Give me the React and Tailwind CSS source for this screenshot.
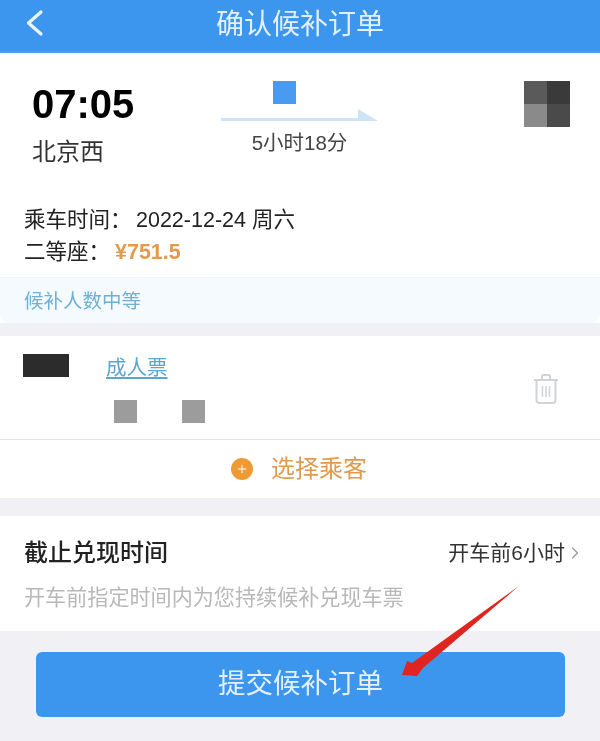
import { ChevronRight, Plus } from "lucide-react";

const sans = "font-['Liberation_Sans','Noto_Sans_CJK_SC',sans-serif]";

function TrainRow() {
  return (
    <div className="flex h-[126px] items-start pl-[32px] pr-[30px] pt-[28px]">
      <div className="w-[189px]">
        <div className="text-[40px] leading-[46px] font-bold text-black">07:05</div>
        <div className="mt-[8px] text-[24px] leading-[34px] text-[#333]">北京西</div>
      </div>
      <div className="flex w-[157px] flex-col items-center">
        <div className="h-[23px] w-[23px] -translate-x-[15px] bg-[#4a9bf0]" />
        <svg width="157" height="14" viewBox="0 0 157 14" className="mt-[4px]">
          <path d="M0 10h137V1l20 12H0z" fill="#cfe3f7" />
        </svg>
        <div className="mt-[8px] whitespace-nowrap text-[20.500px] leading-[26px] text-[#444]">5小时18分</div>
      </div>
      <div className="ml-auto grid h-[46px] w-[46px] grid-cols-2 grid-rows-2">
        <div className="bg-[#5a5a5a]" />
        <div className="bg-[#3a3a3a]" />
        <div className="bg-[#8a8a8a]" />
        <div className="bg-[#4a4a4a]" />
      </div>
    </div>
  );
}

function TripInfo() {
  return (
    <div className="flex h-[98px] flex-col px-[24px] pt-[25px] text-[21.500px] leading-[32px] text-[#222]">
      <div className="flex">
        <span className="w-[112px]">乘车时间：</span>
        <span>2022-12-24 周六</span>
      </div>
      <div className="flex">
        <span className="w-[91px]">二等座：</span>
        <span className="font-bold text-[#e49a4c]">¥751.5</span>
      </div>
    </div>
  );
}

function Passenger() {
  return (
    <div className="relative flex h-[104px] border-b border-[#e3e3e6] pl-[23px] pr-[41px] pt-[18px]">
      <div className="h-[23px] w-[46px] bg-[#2c2c2c]" />
      <div className="ml-[37px]">
        <div className="text-[20.500px] leading-[28px] text-[#5aa5d2] underline underline-offset-2">成人票</div>
        <div className="mt-[18px] flex gap-[45px] pl-[8px]">
          <div className="h-[23px] w-[23px] bg-[#9c9c9c]" />
          <div className="h-[23px] w-[23px] bg-[#9c9c9c]" />
        </div>
      </div>
      <svg width="26" height="30" viewBox="0 0 26 30" fill="none" stroke="#d0d3d7" strokeWidth="2" className="ml-auto mt-[20px]">
        <path d="M1 6h24M9 6V2.500a1.500 1.500 0 0 1 1.500-1.500h5A1.500 1.500 0 0 1 17 2.500V6" />
        <path d="M3.500 6v20a3 3 0 0 0 3 3h13a3 3 0 0 0 3-3V6" />
        <path d="M9.500 12v11M13 12v11M16.500 12v11" strokeWidth="1.500" />
      </svg>
    </div>
  );
}

export default function App() {
  return (
    <div className={`relative h-[741px] w-[600px] overflow-hidden bg-[#f0f0f5] blur-[0.4px] ${sans}`}>
      <header className="relative flex h-[53px] items-center justify-center border-b-2 border-[#4a9ff0] bg-[#3c96ee] pb-[1px]">
        <svg width="20" height="28" viewBox="0 0 20 28" fill="none" className="absolute left-[25px] top-[9px]">
          <path d="M16 3L3.500 14 16 25" stroke="#eaf4fd" strokeWidth="3.200" strokeLinecap="round" strokeLinejoin="round" />
        </svg>
        <h1 className="text-[28px] leading-none font-normal text-[#e3f0fc]">确认候补订单</h1>
      </header>

      <section className="bg-white">
        <TrainRow />
        <TripInfo />
        <div className="flex h-[46px] items-center rounded-b-lg border-t border-[#eef3f7] bg-[#f5fafe] px-[24px] pt-[3px] text-[19.500px] text-[#6db0d8]">
          候补人数中等
        </div>
      </section>

      <section className="mt-[13px] bg-white">
        <Passenger />
        <div className="flex h-[58px] items-center justify-center gap-[18px] pr-[2px]">
          <span className="flex h-[22px] w-[22px] items-center justify-center rounded-full bg-[#f09a36]">
            <Plus className="text-[#fde3c4]" size={12} strokeWidth={3} />
          </span>
          <span className="text-[24px] leading-none text-[#e09a4e]">选择乘客</span>
        </div>
      </section>

      <section className="mt-[18px] h-[115px] bg-white pl-[24px] pr-[15px] pt-[20px]">
        <div className="flex items-center justify-between">
          <span className="text-[24px] leading-[34px] font-medium text-[#222]">截止兑现时间</span>
          <span className="flex items-center text-[21px] text-[#333]">
            开车前6小时
            <ChevronRight className="text-[#999]" size={20} strokeWidth={1.500} />
          </span>
        </div>
        <p className="mt-[13px] text-[21.100px] leading-[30px] text-[#b8b8b8]">开车前指定时间内为您持续候补兑现车票</p>
      </section>

      <div className="px-[36px] pt-[21px]">
        <button className="flex h-[65px] w-[529px] items-center justify-center rounded-md bg-[#3c96ee] pb-[1px] text-[27.500px] text-[#e3f0fc]">
          提交候补订单
        </button>
      </div>

      {/* red annotation arrow over the page */}
      <svg className="absolute left-0 top-0" width="600" height="741" viewBox="0 0 600 741">
        <path d="M519 586 L423 668 L417 676 L402 675 L407 661 L412 663 Z" fill="#e0241f" />
      </svg>
    </div>
  );
}
